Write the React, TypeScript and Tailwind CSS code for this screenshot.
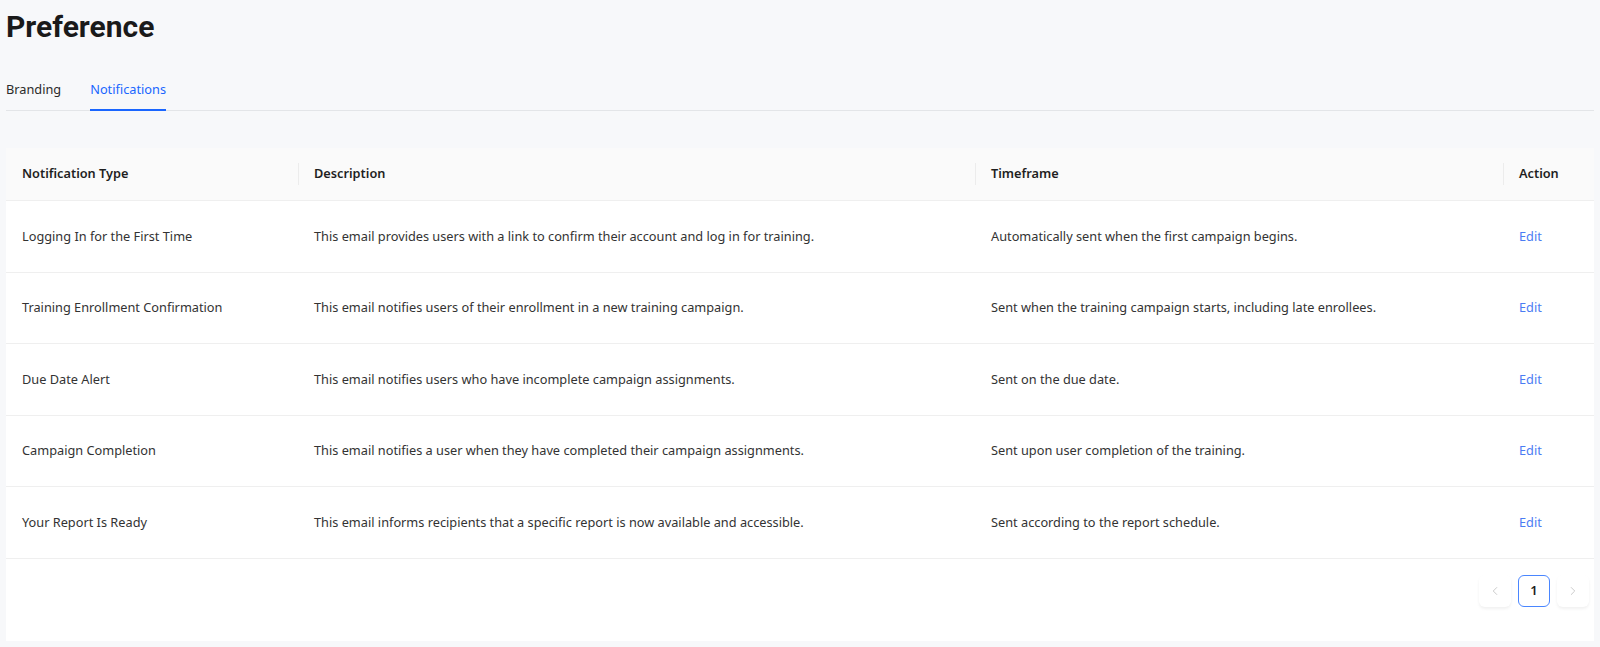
import { ChevronLeft, ChevronRight } from 'lucide-react'

const rows = [
  {
    type: 'Logging In for the First Time',
    description: 'This email provides users with a link to confirm their account and log in for training.',
    timeframe: 'Automatically sent when the first campaign begins.',
  },
  {
    type: 'Training Enrollment Confirmation',
    description: 'This email notifies users of their enrollment in a new training campaign.',
    timeframe: 'Sent when the training campaign starts, including late enrollees.',
  },
  {
    type: 'Due Date Alert',
    description: 'This email notifies users who have incomplete campaign assignments.',
    timeframe: 'Sent on the due date.',
  },
  {
    type: 'Campaign Completion',
    description: 'This email notifies a user when they have completed their campaign assignments.',
    timeframe: 'Sent upon user completion of the training.',
  },
  {
    type: 'Your Report Is Ready',
    description: 'This email informs recipients that a specific report is now available and accessible.',
    timeframe: 'Sent according to the report schedule.',
  },
]

// column template shared by header and rows
const cols = 'grid grid-cols-[292px_677px_528px_1fr]'

function HeaderCell({ label, divider }: { label: string; divider?: boolean }) {
  return (
    <div className="relative flex items-center px-4">
      {divider && <span className="absolute left-0 top-1/2 h-[22px] -translate-y-1/2 w-px bg-[#ececec]" />}
      <span className="text-[12.75px] font-semibold text-[#1f1f1f]">{label}</span>
    </div>
  )
}

export default function App() {
  return (
    <div
      className="min-h-screen bg-[#f7f8fa] px-[6px] pb-[7px]"
      style={{ fontFamily: '"Segoe UI", "Noto Sans", sans-serif' }}
    >
      <h1
        className="pt-[9px] text-[30px] font-bold leading-[36px] text-[#1a1a1a]"
        style={{ fontFamily: 'Roboto, "Noto Sans", sans-serif' }}
      >
        Preference
      </h1>

      {/* Tabs */}
      <div className="mt-[25px] flex gap-[29px] border-b border-[#e3e5e8]">
        <button className="flex h-[40px] items-center text-[12.75px] text-[#2b2b2b]">Branding</button>
        <button className="relative flex h-[40px] items-center text-[12.75px] text-[#1a66ff]">
          Notifications
          <span className="absolute bottom-[-1px] left-0 right-0 h-[2px] bg-[#1a66ff]" />
        </button>
      </div>

      {/* Table card */}
      <div className="mt-[37px] bg-white">
        <div className={`${cols} h-[53px] border-b border-[#efefef] bg-[#fafafa]`}>
          <HeaderCell label="Notification Type" />
          <HeaderCell label="Description" divider />
          <HeaderCell label="Timeframe" divider />
          <HeaderCell label="Action" divider />
        </div>

        {rows.map((r) => (
          <div key={r.type} className={`${cols} h-[71.5px] border-b border-[#efefef] text-[12.75px] text-[#333333]`}>
            <div className="flex items-center px-4">{r.type}</div>
            <div className="flex items-center px-4">{r.description}</div>
            <div className="flex items-center px-4">{r.timeframe}</div>
            <div className="flex items-center px-4">
              <button className="text-[#4b7cf3]">Edit</button>
            </div>
          </div>
        ))}

        {/* Pagination */}
        <div className="flex justify-end gap-[7px] pb-[34px] pr-[5px] pt-[16px]">
          <button className="flex h-8 w-8 items-center justify-center rounded-md bg-white shadow-[0_2px_3px_rgba(0,0,0,0.06)] text-[#c4c4c4]">
            <ChevronLeft size={14} strokeWidth={1.5} />
          </button>
          <button className="flex h-8 w-8 items-center justify-center rounded-md border border-[#4a86ff] text-[13px] font-semibold text-[#1f1f1f]">
            1
          </button>
          <button className="flex h-8 w-8 items-center justify-center rounded-md bg-white shadow-[0_2px_3px_rgba(0,0,0,0.06)] text-[#c4c4c4]">
            <ChevronRight size={14} strokeWidth={1.5} />
          </button>
        </div>
      </div>
    </div>
  )
}
